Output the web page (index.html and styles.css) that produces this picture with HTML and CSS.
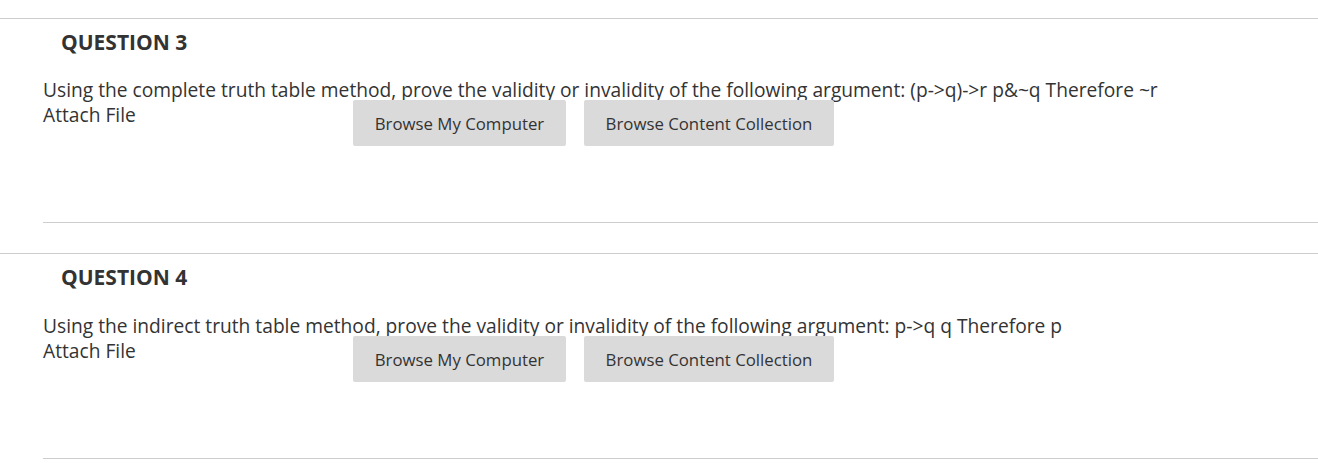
FILE: index.html
```html
<!DOCTYPE html>
<html>
<head>
<meta charset="utf-8">
<link rel="stylesheet" href="styles.css">
</head>
<body>
<div class="page">
  <section class="question">
    <h2 class="q-title">QUESTION 3</h2>
    <div class="q-body">
      <p class="q-text">Using the complete truth table method, prove the validity or invalidity of the following argument: (p-&gt;q)-&gt;r p&amp;~q Therefore ~r</p>
      <div class="attach">
        <span class="attach-label">Attach File</span>
        <button class="btn btn-computer">Browse My Computer</button>
        <button class="btn btn-content">Browse Content Collection</button>
      </div>
    </div>
  </section>
  <section class="question">
    <h2 class="q-title">QUESTION 4</h2>
    <div class="q-body">
      <p class="q-text">Using the indirect truth table method, prove the validity or invalidity of the following argument: p-&gt;q q Therefore p</p>
      <div class="attach">
        <span class="attach-label">Attach File</span>
        <button class="btn btn-computer">Browse My Computer</button>
        <button class="btn btn-content">Browse Content Collection</button>
      </div>
    </div>
  </section>
</div>
</body>
</html>
```
FILE: styles.css
```css
html, body {
  margin: 0;
  padding: 0;
  background: #ffffff;
}

body {
  font-family: "Open Sans", "Liberation Sans", sans-serif;
  color: #333333;
}

.page {
  padding-top: 18px;
}

.question {
  border-top: 1px solid #cdcdcd;
  padding-bottom: 30px;
}

.question:last-child {
  padding-bottom: 0;
}

.q-title {
  margin: 0;
  padding: 9px 0 0 61px;
  font-size: 21px;
  line-height: 28px;
  font-weight: 700;
  color: #333333;
}

.q-body {
  margin-left: 43px;
  border-bottom: 1px solid #cdcdcd;
  padding-top: 21px;
  padding-bottom: 76px;
}

.question:last-child .q-body {
  padding-top: 22px;
}

.q-text {
  margin: 0;
  font-size: 19.2px;
  line-height: 25px;
  color: #333333;
}

.attach {
  display: flex;
  align-items: flex-start;
  font-size: 19.2px;
  line-height: 25px;
}

.attach-label {
  width: 310px;
  flex: none;
}

.btn {
  margin-top: -2px;
  height: 46px;
  padding: 0;
  border: none;
  border-radius: 2px;
  background: #dadada;
  color: #333333;
  font-family: "Open Sans", "Liberation Sans", sans-serif;
  font-size: 16.8px;
  cursor: pointer;
}

.btn-computer {
  width: 213px;
}

.btn-content {
  margin-left: 18px;
  width: 250px;
}
```
